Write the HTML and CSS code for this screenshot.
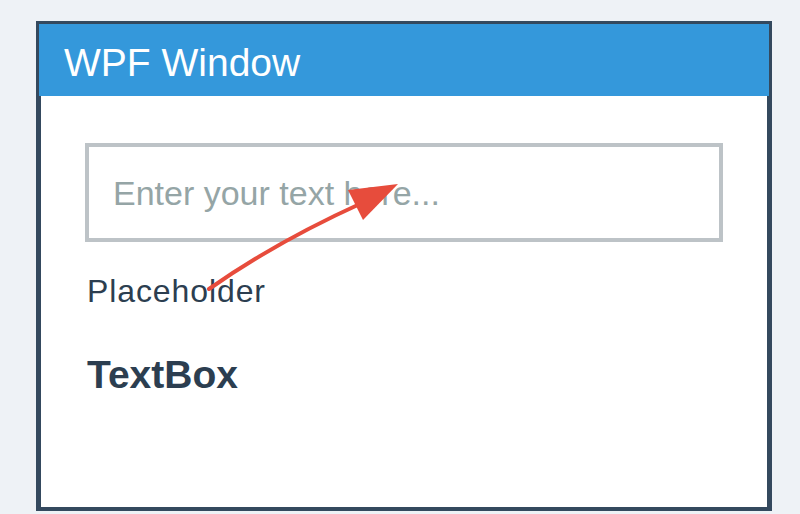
FILE: index.html
```html
<!DOCTYPE html>
<html lang="en">
<head>
    <meta charset="UTF-8">
    <meta name="viewport" content="width=device-width, initial-scale=1.0">
    <title>WPF Window</title>
    <link rel="stylesheet" href="styles.css">
</head>
<body>
    <div class="window">
        <div class="titlebar">WPF Window</div>
        <div class="content">
            <input class="textbox" type="text" placeholder="Enter your text here...">
            <div class="label">Placeholder</div>
            <div class="heading">TextBox</div>
        </div>
    </div>

    <!-- annotation arrow -->
    <svg class="arrow" width="800" height="514" viewBox="0 0 800 514">
        <path d="M209 289 Q276 242 362 203" fill="none" stroke="#e74c3c" stroke-width="4" stroke-linecap="round"/>
        <polygon points="398,184 348,190 363,220" fill="#e74c3c"/>
    </svg>
</body>
</html>
```
FILE: styles.css
```css
* {
    margin: 0;
    padding: 0;
    box-sizing: border-box;
}
body {
    font-family: "Liberation Sans", Arial, sans-serif;
    background: #eef2f6;
    padding: 21px 0 0 36px;
    height: 514px;
    overflow: hidden;
}
.window {
    width: 736px;
    height: 490px;
    display: flex;
    flex-direction: column;
    border: 3px solid #34495e;
    border-bottom-width: 4px;
    background: #fff;
}
.titlebar {
    height: 72px;
    flex-shrink: 0;
    display: flex;
    align-items: center;
    padding-left: 25px;
    padding-top: 5px;
    background: #3498db;
    color: #fff;
    font-size: 39px;
}
.content {
    flex: 1;
    border-left: 2px solid #34495e;
    border-right: 2px solid #34495e;
    padding: 47px 0 0 44px;
}
.textbox {
    display: block;
    width: 638px;
    height: 99px;
    border: 4px solid #bdc3c7;
    padding: 2px 24px 0;
    font-family: inherit;
    font-size: 34px;
    color: #2c3e50;
    outline: none;
}
.textbox::placeholder {
    color: #95a5a6;
}
.label {
    margin-top: 31px;
    padding-left: 2px;
    font-size: 32px;
    line-height: 36px;
    color: #2c3e50;
    letter-spacing: 0.9px;
}
.heading {
    margin-top: 44px;
    padding-left: 2px;
    font-size: 39px;
    line-height: 44px;
    font-weight: bold;
    color: #2c3e50;
}
.arrow {
    position: absolute;
    top: 0;
    left: 0;
    pointer-events: none;
}
```
